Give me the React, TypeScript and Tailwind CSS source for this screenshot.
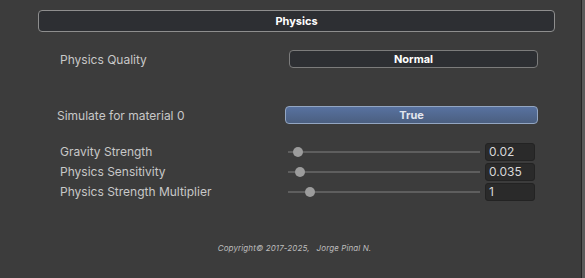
import React from "react";

const sliders = [
  { label: "Gravity Strength", value: "0.02", pos: 10 },
  { label: "Physics Sensitivity", value: "0.035", pos: 12 },
  { label: "Physics Strength Multiplier", value: "1", pos: 22 },
];

function Slider({ pos }: { pos: number }) {
  return (
    <div className="relative h-[18px] w-[192px] flex items-center">
      <div className="h-[2px] w-full bg-[#5e5e5e]" />
      <div
        className="absolute top-1/2 h-[10px] w-[10px] -translate-x-1/2 -translate-y-1/2 rounded-full bg-[#9c9c9c]"
        style={{ left: pos }}
      />
    </div>
  );
}

export default function App() {
  return (
    <div className="flex h-[278px] w-full bg-[#3c3c3c] font-['Inter',sans-serif] text-[12px] text-[#c8c8c8]">
      <div className="flex w-[581px] flex-col">
        {/* Section header */}
        <div className="mt-[10px] ml-[38px] flex h-[22px] w-[517px] items-center justify-center rounded-[4px] border border-[#8e8e8e] bg-[#2d2f33] text-[11px] font-bold text-white">
          Physics
        </div>

        {/* Quality */}
        <div className="mt-[18px] flex h-[18px] items-center">
          <span className="ml-[60px] w-[229px] pt-px">Physics Quality</span>
          <div className="flex h-[18px] w-[249px] items-center justify-center rounded-[4px] border border-[#7c7c7c] bg-[#2d2f33] text-[11px] font-bold text-white">
            Normal
          </div>
        </div>

        {/* Simulate toggle */}
        <div className="mt-[38px] flex h-[18px] items-center">
          <span className="ml-[57px] w-[228px] pt-px">Simulate for material 0</span>
          <div className="flex h-[18px] w-[253px] items-center justify-center rounded-[4px] border border-[#93a6c2] bg-gradient-to-b from-[#5872a0] to-[#4b5f80] text-[11px] font-bold text-[#e2e6ee]">
            True
          </div>
        </div>

        {/* Sliders */}
        <div className="mt-[19px] flex flex-col gap-[2px]">
          {sliders.map((s) => (
            <div key={s.label} className="flex h-[18px] items-center">
              <span className="ml-[60px] w-[228px]">{s.label}</span>
              <Slider pos={s.pos} />
              <div className="ml-[5px] flex h-[18px] w-[50px] items-center rounded-[3px] border border-[#232323] bg-[#2a2a2a] px-[3px] text-[#d8d8d8]">
                {s.value}
              </div>
            </div>
          ))}
        </div>

        <div className="mt-[41px] pl-[8px] text-center text-[8px] italic tracking-[0.1px] text-[#bdbdbd]">
          Copyright© 2017-2025,&nbsp;&nbsp; Jorge Pinal N.
        </div>
      </div>
      <div className="w-px bg-[#262626]" />
      <div className="flex-1 bg-[#5a5a5a]" />
    </div>
  );
}
